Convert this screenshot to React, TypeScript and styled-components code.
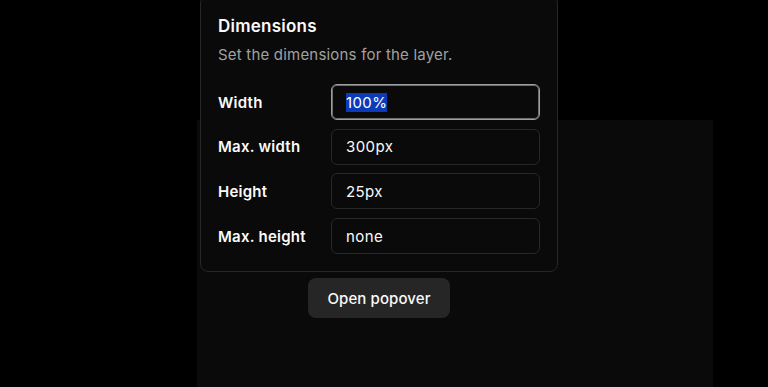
import { Fragment, useEffect, useRef } from "react";
import styled, { createGlobalStyle } from "styled-components";

const GlobalStyle = createGlobalStyle`
    html, body {
        margin: 0;
        padding: 0;
        background: #000;
        overflow: hidden;
    }
    body {
        font-family: Inter, "Noto Sans", sans-serif;
        color: #fafafa;
        -webkit-font-smoothing: antialiased;
    }
    * { box-sizing: border-box; }
`;

const Stage = styled.div`
    height: 387px;
    padding: 120px 0 0 197px;
`;

const Panel = styled.div`
    width: 516px;
    height: 267px;
    background: #0a0a0a;
    padding: 158px 0 0 111px;
`;

const Anchor = styled.div`
    position: relative;
    display: inline-block;
`;

const Trigger = styled.button`
    width: 142px;
    height: 40px;
    padding: 0;
    border: none;
    border-radius: 8px;
    background: #262626;
    color: #fafafa;
    font-family: inherit;
    font-size: 15px;
    font-weight: 500;
    letter-spacing: 0.1px;
    cursor: pointer;
`;

const Popover = styled.div`
    position: absolute;
    left: 50%;
    bottom: calc(100% + 6px);
    transform: translateX(-50%);
    width: 358px;
    padding: 17px;
    background: #0a0a0a;
    border: 1px solid #27272a;
    border-radius: 8px;
`;

const Title = styled.h4`
    margin: 0;
    font-size: 17px;
    line-height: 24px;
    font-weight: 600;
    letter-spacing: 0.25px;
    color: #fafafa;
    transform: translateY(1px);
`;

const Subtitle = styled.p`
    margin: 7px 0 0;
    font-size: 15px;
    line-height: 20px;
    letter-spacing: 0.2px;
    color: #a1a1a1;
    transform: translateY(1px);
`;

const Fields = styled.div`
    margin-top: 20px;
    display: grid;
    grid-template-columns: 113px 1fr;
    grid-auto-rows: 36px;
    row-gap: 8.67px;
    align-items: center;
`;

const Label = styled.label`
    font-size: 15px;
    font-weight: 600;
    letter-spacing: 0.25px;
    color: #fafafa;
`;

const Input = styled.input`
    height: 36px;
    width: 100%;
    padding: 0 14px;
    border: 1px solid #27272a;
    border-radius: 6px;
    background: transparent;
    color: #fafafa;
    font-family: inherit;
    font-size: 15px;
    letter-spacing: 0.4px;
    outline: none;

    &:focus {
        border-color: #9e9e9e;
        box-shadow: inset 0 0 0 1px #6e6e6e;
    }

    &::selection {
        background: #0b3bb8;
        color: #fff;
    }
`;

const fields = [
    { id: "width", label: "Width", value: "100%" },
    { id: "maxWidth", label: "Max. width", value: "300px" },
    { id: "height", label: "Height", value: "25px" },
    { id: "maxHeight", label: "Max. height", value: "none" },
];

export default function App() {
    const firstRef = useRef<HTMLInputElement>(null);

    useEffect(() => {
        firstRef.current?.focus();
        firstRef.current?.select();
    }, []);

    return (
        <>
            <GlobalStyle />
            <Stage>
                <Panel>
                    <Anchor>
                        <Popover>
                            <Title>Dimensions</Title>
                            <Subtitle>Set the dimensions for the layer.</Subtitle>
                            <Fields>
                                {fields.map((f, i) => (
                                    <Fragment key={f.id}>
                                        <Label htmlFor={f.id}>{f.label}</Label>
                                        <Input
                                            id={f.id}
                                            defaultValue={f.value}
                                            ref={i === 0 ? firstRef : undefined}
                                        />
                                    </Fragment>
                                ))}
                            </Fields>
                        </Popover>
                        <Trigger>Open popover</Trigger>
                    </Anchor>
                </Panel>
            </Stage>
        </>
    );
}
